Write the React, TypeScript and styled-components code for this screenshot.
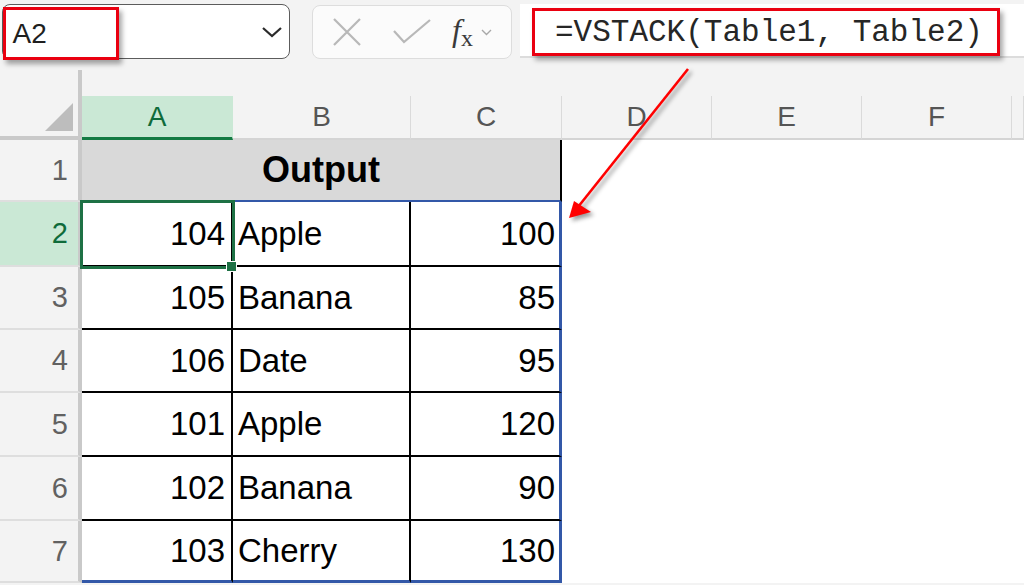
import React from 'react';
import styled, { createGlobalStyle } from 'styled-components';

const GlobalStyle = createGlobalStyle`
  html, body {
    margin: 0;
    padding: 0;
  }
  body {
    background: #f3f3f3;
    font-family: 'Liberation Sans', Arial, sans-serif;
    overflow: hidden;
  }
  * {
    box-sizing: border-box;
  }
`;

const Page = styled.div`
  position: relative;
  width: 1024px;
  height: 585px;
  overflow: hidden;
`;

const TopBar = styled.div`
  display: flex;
  align-items: flex-start;
  height: 70px;
  padding: 4px 0 0 2px;
`;

const NameBox = styled.div`
  display: flex;
  align-items: flex-start;
  width: 288px;
  height: 55px;
  background: #fff;
  border: 1.5px solid #5c5c5c;
  border-radius: 8px;
`;

const RedMark = styled.div`
  border: 3px solid #ea0010;
  box-shadow: 3px 4px 5px rgba(0, 0, 0, 0.35);
  background: #fff;
  display: flex;
  align-items: center;
`;

const NameMark = styled(RedMark)`
  width: 116px;
  height: 53px;
  margin: 1.5px 0 0 -0.5px;
  padding: 2px 0 0 7px;
  font-size: 28px;
  color: #1f1f1f;
`;

const Chevron = styled.svg`
  margin: 0 6px 0 auto;
  align-self: center;
`;

const FxGroup = styled.div`
  display: flex;
  align-items: center;
  width: 200px;
  height: 54px;
  margin: 1px 0 0 22px;
  padding-left: 20px;
  background: #fbfbfb;
  border: 1px solid #dddddd;
  border-radius: 8px;
`;

const FxIcon = styled.svg<{ $gap: number }>`
  margin-left: ${(p) => p.$gap}px;
  flex-shrink: 0;
`;

const FxLabel = styled.span`
  margin-left: 21px;
  font-family: 'Liberation Serif', 'Times New Roman', serif;
  font-style: italic;
  font-size: 32px;
  color: #3a3a3a;
  line-height: 1;

  sub {
    font-size: 24px;
    font-style: normal;
    vertical-align: -5px;
  }
`;

const FormulaArea = styled.div`
  flex: 1;
  height: 54px;
  margin-left: 8px;
  background: #fff;
  border-bottom: 2px solid #dcdcdc;
`;

const FormulaMark = styled(RedMark)`
  width: 468px;
  height: 48px;
  margin: 4px 0 0 12px;
  padding-left: 20px;
  font-family: 'Liberation Mono', 'Courier New', monospace;
  font-size: 31px;
  color: #262626;
`;

const HeaderRow = styled.div`
  display: flex;
  align-items: flex-end;
  height: 70px;
`;

const Corner = styled.div`
  position: relative;
  width: 82px;
  height: 70px;
  border-right: 4px solid #c9c9c9;
  border-bottom: 4px solid #c9c9c9;

  &::after {
    content: '';
    position: absolute;
    right: 5px;
    bottom: 5px;
    border-style: solid;
    border-width: 0 0 28px 28px;
    border-color: transparent transparent #bdbdbd transparent;
  }
`;

const ColHead = styled.div<{ $w?: number; $active?: boolean }>`
  ${(p) => (p.$w ? `width: ${p.$w}px;` : 'flex: 1;')}
  height: 44px;
  display: flex;
  align-items: center;
  justify-content: center;
  font-size: 28px;
  color: ${(p) => (p.$active ? '#0f6b3a' : '#555555')};
  background: ${(p) => (p.$active ? '#cae8d5' : '#f3f3f3')};
  border-right: 1px solid ${(p) => (p.$active ? '#cae8d5' : '#dadada')};
  border-bottom: ${(p) => (p.$active ? '3px solid #137a43' : '2px solid #d4d4d4')};
  padding-top: ${(p) => (p.$active ? '1px' : '0')};
`;

const Row = styled.div<{ $h: number }>`
  display: flex;
  height: ${(p) => p.$h}px;
`;

const RowHead = styled.div<{ $active?: boolean }>`
  width: 82px;
  display: flex;
  align-items: center;
  justify-content: flex-end;
  padding-right: 10px;
  font-size: 29px;
  color: ${(p) => (p.$active ? '#0f6b3a' : '#616161')};
  background: ${(p) => (p.$active ? '#cae8d5' : '#f3f3f3')};
  border-right: 4px solid #c9c9c9;
  border-bottom: 2px solid #dedede;
`;

const TitleCell = styled.div`
  width: 480px;
  display: flex;
  align-items: center;
  justify-content: center;
  font-size: 36px;
  font-weight: bold;
  color: #000;
  background: #d9d9d9;
  border-right: 2px solid #000;
  border-bottom: 2px solid #3358a8;
`;

const Cell = styled.div<{
  $w: number;
  $num?: boolean;
  $edge?: boolean;
  $last?: boolean;
  $selected?: boolean;
}>`
  position: relative;
  width: ${(p) => p.$w}px;
  display: flex;
  align-items: center;
  justify-content: ${(p) => (p.$num ? 'flex-end' : 'flex-start')};
  padding: 0 ${(p) => (p.$edge ? 4 : 6)}px 0 5px;
  font-size: 33px;
  color: #000;
  background: #fff;
  border-right: ${(p) => (p.$edge ? '3px solid #3358a8' : '2px solid #000')};
  border-bottom: ${(p) => (p.$last ? '3px solid #3358a8' : '2px solid #000')};

  ${(p) =>
    p.$selected &&
    `
    z-index: 2;
    outline: 3px solid #1e7145;
    outline-offset: -1px;

    &::after {
      content: '';
      position: absolute;
      right: -6px;
      bottom: -7px;
      width: 9px;
      height: 9px;
      background: #1e7145;
      border: 1px solid #fff;
    }
  `}
`;

const Filler = styled.div`
  flex: 1;
  background: #fff;
`;

const Arrow = styled.svg`
  position: absolute;
  top: 0;
  left: 0;
  pointer-events: none;
  filter: drop-shadow(3px 3px 2px rgba(0, 0, 0, 0.4));
  z-index: 5;
`;

const columns = [
  { key: 'A', w: 151 },
  { key: 'B', w: 178 },
  { key: 'C', w: 151 },
  { key: 'D', w: 150 },
  { key: 'E', w: 150 },
  { key: 'F', w: 150 },
];

const rows = [
  { n: 2, id: '104', fruit: 'Apple', qty: '100', h: 65 },
  { n: 3, id: '105', fruit: 'Banana', qty: '85', h: 63 },
  { n: 4, id: '106', fruit: 'Date', qty: '95', h: 63 },
  { n: 5, id: '101', fruit: 'Apple', qty: '120', h: 64 },
  { n: 6, id: '102', fruit: 'Banana', qty: '90', h: 64 },
  { n: 7, id: '103', fruit: 'Cherry', qty: '130', h: 62 },
];

const App: React.FC = () => {
  return (
    <Page>
      <GlobalStyle />
      <TopBar>
        <NameBox>
          <NameMark>A2</NameMark>
          <Chevron width="22" height="14" viewBox="0 0 22 14">
            <path d="M2 3 L11 11 L20 3" fill="none" stroke="#2b2b2b" strokeWidth="2.2" />
          </Chevron>
        </NameBox>
        <FxGroup>
          <FxIcon $gap={0} width="28" height="28" viewBox="0 0 28 28">
            <path d="M1 1 L27 27 M27 1 L1 27" stroke="#b8b8b8" strokeWidth="2.2" fill="none" />
          </FxIcon>
          <FxIcon $gap={32} width="38" height="26" viewBox="0 0 38 26">
            <path d="M1 12 L11 23 L37 1" stroke="#b8b8b8" strokeWidth="2.2" fill="none" />
          </FxIcon>
          <FxLabel>
            f<sub>x</sub>
          </FxLabel>
          <FxIcon $gap={8} width="11" height="7" viewBox="0 0 11 7">
            <path d="M1 1 L5.5 5.5 L10 1" stroke="#a8a8a8" strokeWidth="1.4" fill="none" />
          </FxIcon>
        </FxGroup>
        <FormulaArea>
          <FormulaMark>=VSTACK(Table1, Table2)</FormulaMark>
        </FormulaArea>
      </TopBar>

      <HeaderRow>
        <Corner />
        {columns.map((c) => (
          <ColHead key={c.key} $w={c.w} $active={c.key === 'A'}>
            {c.key}
          </ColHead>
        ))}
        <ColHead />
      </HeaderRow>

      <Row $h={62}>
        <RowHead>1</RowHead>
        <TitleCell>Output</TitleCell>
        <Filler />
      </Row>

      {rows.map((r, i) => (
        <Row key={r.n} $h={r.h}>
          <RowHead $active={r.n === 2}>{r.n}</RowHead>
          <Cell $w={151} $num $selected={r.n === 2} $last={i === rows.length - 1}>
            {r.id}
          </Cell>
          <Cell $w={178} $last={i === rows.length - 1}>
            {r.fruit}
          </Cell>
          <Cell $w={151} $num $edge $last={i === rows.length - 1}>
            {r.qty}
          </Cell>
          <Filler />
        </Row>
      ))}

      <Arrow width="1024" height="585" viewBox="0 0 1024 585">
        <line x1="688" y1="69" x2="578" y2="207" stroke="#ff0000" strokeWidth="2.6" />
        <polygon points="569,218 574,201 591,212" fill="#ff0000" />
      </Arrow>
    </Page>
  );
};

export default App;
